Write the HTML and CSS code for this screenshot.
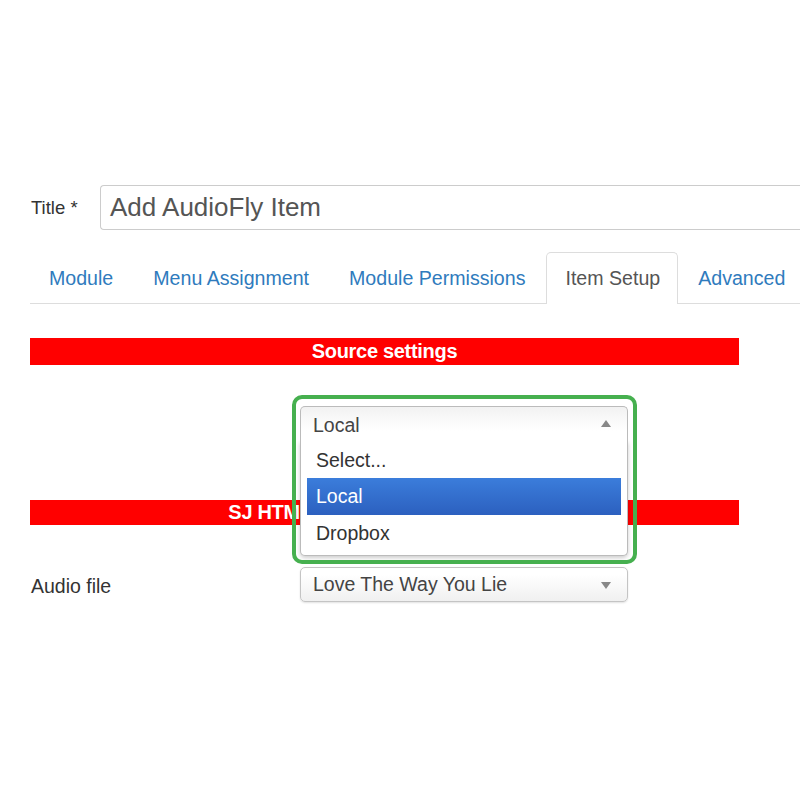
FILE: index.html
```html
<!DOCTYPE html>
<html>
<head>
<meta charset="utf-8">
<link rel="stylesheet" href="styles.css">
</head>
<body>
<div class="page">
  <div class="title-row">
    <label class="title-label">Title *</label>
    <div class="title-input">Add AudioFly Item</div>
  </div>

  <ul class="tabs">
    <li class="tab">Module</li>
    <li class="tab">Menu Assignment</li>
    <li class="tab">Module Permissions</li>
    <li class="tab active">Item Setup</li>
    <li class="tab">Advanced</li>
  </ul>

  <div class="section-bar">Source settings</div>

  <div class="field-row source-row">
    <div class="field-label"></div>
    <div class="select-wrap">
      <div class="select open">Local<span class="caret up"></span></div>
      <ul class="dd-list">
        <li class="dd-opt">Select...</li>
        <li class="dd-opt selected">Local</li>
        <li class="dd-opt">Dropbox</li>
      </ul>
      <div class="highlight"></div>
    </div>
  </div>

  <div class="section-bar second">SJ HTML5 Audio Player's settings</div>

  <div class="field-row audio-row">
    <div class="field-label">Audio file</div>
    <div class="select-wrap">
      <div class="select">Love The Way You Lie<span class="caret down"></span></div>
    </div>
  </div>
</div>
</body>
</html>
```

FILE: styles.css
```css
* { box-sizing: border-box; }
html, body { margin: 0; padding: 0; background: #fff; }
body {
  font-family: "Liberation Sans", Arial, sans-serif;
  color: #333;
  width: 800px;
  height: 800px;
  overflow: hidden;
}
.page {
  padding: 185px 0 0 30px;
}
.title-row {
  display: flex;
  align-items: center;
  height: 45px;
}
.title-label {
  width: 70px;
  font-size: 18.5px;
  color: #333;
  padding-left: 1px;
}
.title-input {
  flex: 1;
  height: 45px;
  border: 1px solid #ccc;
  border-right: none;
  border-radius: 4px 0 0 4px;
  font-size: 26px;
  color: #555;
  padding-left: 9px;
  line-height: 42px;
}
.tabs {
  list-style: none;
  margin: 22px 0 0 0;
  padding: 0;
  display: flex;
  border-bottom: 1px solid #ddd;
  height: 52px;
  white-space: nowrap;
}
.tab {
  padding: 0 19px 0 18px;
  margin-right: 1px;
  font-size: 19.6px;
  color: #2f7bbd;
  line-height: 50px;
  border: 1px solid transparent;
  border-bottom: none;
  border-radius: 5px 5px 0 0;
}
.tab.active {
  color: #555;
  border-color: #ddd;
  background: #fff;
  height: 52px;
  padding: 0 17px 0 18px;
}
.section-bar {
  margin-top: 34px;
  width: 709px;
  height: 27px;
  background: #ff0000;
  color: #fff;
  font-weight: bold;
  font-size: 20px;
  text-align: center;
  line-height: 26px;
  letter-spacing: -0.3px;
}
.section-bar.second {
  margin-top: 59px;
  height: 25px;
  line-height: 24px;
}
.field-row {
  display: flex;
  align-items: center;
}
.source-row {
  margin-top: 41px;
}
.audio-row {
  margin-top: 42px;
}
.field-label {
  width: 270px;
  font-size: 19.5px;
  color: #333;
  padding-left: 1px;
  padding-top: 3px;
}
.select-wrap {
  position: relative;
  width: 328px;
}
.select {
  height: 35px;
  border: 1px solid #c4c4c4;
  border-radius: 5px;
  background: linear-gradient(#ffffff 20%, #f0f0f0 100%);
  box-shadow: 0 1px 2px rgba(0,0,0,0.12);
  font-size: 19.5px;
  color: #444;
  padding-left: 12px;
  line-height: 33px;
  position: relative;
}
.select.open {
  border-color: #bbb;
  border-bottom: none;
  border-radius: 5px 5px 0 0;
  background: linear-gradient(#f2f2f2, #ffffff 70%);
  box-shadow: none;
  line-height: 36px;
  z-index: 2;
}
.caret {
  position: absolute;
  right: 16px;
  top: 50%;
  width: 0;
  height: 0;
  border-left: 5px solid transparent;
  border-right: 5px solid transparent;
}
.caret.down {
  border-top: 7px solid #888;
  margin-top: -3px;
}
.caret.up {
  border-bottom: 7px solid #888;
  margin-top: -4px;
}
.dd-list {
  position: absolute;
  left: 0;
  top: 35px;
  width: 328px;
  height: 115px;
  list-style: none;
  margin: 0;
  padding: 1px 6px 0;
  background: #fff;
  border: 1px solid #bbb;
  border-top: none;
  border-radius: 0 0 5px 5px;
  box-shadow: 0 2px 4px rgba(0,0,0,0.2);
  z-index: 1;
}
.dd-opt {
  height: 36px;
  line-height: 36px;
  font-size: 19.5px;
  color: #333;
  padding-left: 9px;
}
.dd-opt.selected {
  height: 37px;
  color: #fff;
  background: linear-gradient(#3b7ddb, #2c60bf);
}
.highlight {
  position: absolute;
  left: -8px;
  top: -11px;
  width: 345px;
  height: 169px;
  border: 4px solid #46b04f;
  border-radius: 10px;
  pointer-events: none;
  z-index: 3;
}
```
